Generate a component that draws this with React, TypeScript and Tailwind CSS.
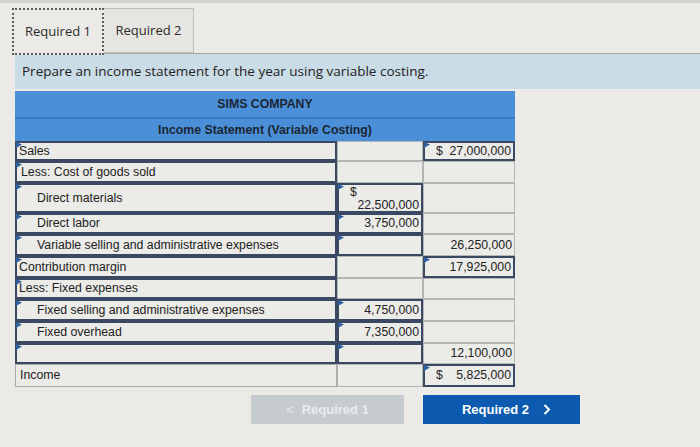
import React from "react";

type Cell = { input?: boolean; dollar?: boolean; val?: string; split?: boolean };
type Row = { label: string; indent: number; h: number; labelInput: boolean; c2: Cell; c3: Cell };

const rows: Row[] = [
  { label: "Sales", indent: 0, h: 20, labelInput: true, c2: {}, c3: { input: true, dollar: true, val: "27,000,000" } },
  { label: "Less: Cost of goods sold", indent: 1, h: 22, labelInput: true, c2: {}, c3: {} },
  { label: "Direct materials", indent: 2, h: 30, labelInput: true, c2: { input: true, split: true, val: "22,500,000" }, c3: {} },
  { label: "Direct labor", indent: 2, h: 21, labelInput: true, c2: { input: true, val: "3,750,000" }, c3: {} },
  { label: "Variable selling and administrative expenses", indent: 2, h: 22, labelInput: true, c2: { input: true }, c3: { val: "26,250,000" } },
  { label: "Contribution margin", indent: 0, h: 22, labelInput: true, c2: {}, c3: { input: true, val: "17,925,000" } },
  { label: "Less: Fixed expenses", indent: 0, h: 21, labelInput: true, c2: {}, c3: {} },
  { label: "Fixed selling and administrative expenses", indent: 2, h: 22, labelInput: true, c2: { input: true, val: "4,750,000" }, c3: {} },
  { label: "Fixed overhead", indent: 2, h: 22, labelInput: true, c2: { input: true, val: "7,350,000" }, c3: {} },
  { label: "", indent: 0, h: 21, labelInput: true, c2: { input: true }, c3: { val: "12,100,000" } },
  { label: "Income", indent: 1, h: 23, labelInput: false, c2: {}, c3: { input: true, dollar: true, val: "5,825,000" } },
];

function Flag() {
  return (
    <svg className="absolute left-[-1px] top-[-1px]" width="6" height="7" viewBox="0 0 6 7">
      <polygon points="0,0 6,2.5 0,6" fill="#2f5f9e" />
    </svg>
  );
}

function ValueCell({ c, h }: { c: Cell; h: number }) {
  const border = c.input ? "border-2 border-[#3a4961]" : "border border-[#b3b5b7]";
  return (
    <div className={`relative ${border} bg-[#ebebe8] text-[12.3px] text-[#222]`} style={{ height: h }}>
      {c.input && <Flag />}
      {c.split ? (
        <div className="flex h-full flex-col px-[2px]">
          <div className="pl-[9px] leading-[12px] mt-[1px]">$</div>
          <div className="text-right leading-[14px]">{c.val}</div>
        </div>
      ) : (
        <div className="flex h-full items-center justify-between pr-[2px] pl-[11px]">
          <span>{c.dollar ? "$" : ""}</span>
          <span>{c.val ?? ""}</span>
        </div>
      )}
    </div>
  );
}

export default function App() {
  return (
    <div
      className="relative h-[447px] w-[700px] overflow-hidden bg-[#ebeae6]"
      style={{ fontFamily: "'Liberation Sans', Arial, sans-serif" }}
    >
      <div className="h-[3px] bg-[#d3d2ce]" />
      {/* Tabs */}
      <div className="flex items-start pl-[12px] pt-[5px]" style={{ fontFamily: "'Open Sans', sans-serif" }}>
        <div className="flex h-[47px] w-[92px] items-center justify-center border-2 border-dotted border-[#5d5d5d] bg-[#ebeae6] text-[13px] text-[#2b2b2b]">
          Required 1
        </div>
        <div className="flex h-[45px] w-[90px] items-center justify-center border border-l-0 border-[#bdbcb8] bg-[#e6e5e1] text-[13px] text-[#2b2b2b]">
          Required 2
        </div>
      </div>
      {/* Instruction bar */}
      <div
        className="ml-[15px] mt-[-2px] flex h-[36px] items-center border-t border-[#a9aaa8] bg-[#cadce6] pl-[7px] text-[13.5px] text-[#222]"
        style={{ fontFamily: "'Open Sans', sans-serif" }}
      >
        Prepare an income statement for the year using variable costing.
      </div>
      {/* Table */}
      <div className="ml-[15px] mt-[2px] w-[500px]">
        <div className="flex h-[28px] items-center justify-center border-b-2 border-[#3d77bd] bg-[#4b8fd8] text-[12.3px] font-bold text-[#1c2633]">
          SIMS COMPANY
        </div>
        <div className="flex h-[22px] items-center justify-center bg-[#4b8fd8] text-[12.3px] font-bold text-[#1c2633]">
          Income Statement (Variable Costing)
        </div>
        <div className="grid grid-cols-[322px_86px_92px]">
          {rows.map((r, i) => (
            <React.Fragment key={i}>
              <div
                className={`relative flex items-center bg-[#ebebe8] text-[12.3px] text-[#222] ${
                  r.labelInput ? "border-2 border-[#3a4961]" : "border border-[#a8aaac]"
                } ${r.indent === 2 ? "pl-[20px]" : r.indent === 1 ? "pl-[4px]" : "pl-[2px]"}`}
                style={{ height: r.h }}
              >
                {r.labelInput && <Flag />}
                {r.label}
              </div>
              <ValueCell c={r.c2} h={r.h} />
              <ValueCell c={r.c3} h={r.h} />
            </React.Fragment>
          ))}
        </div>
      </div>
      {/* Buttons */}
      <div className="ml-[251px] mt-[8px] flex gap-[19px]">
        <div className="flex h-[29px] w-[153px] items-center justify-center gap-[8px] bg-[#c6cbd0] text-[13px] font-bold text-[#e9ecef]">
          <span className="font-normal">&lt;</span>
          <span>Required 1</span>
        </div>
        <div className="flex h-[29px] w-[157px] items-center justify-center gap-[14px] bg-[#0c5bb0] pl-[10px] text-[13px] font-bold text-white">
          <span>Required 2</span>
          <svg width="8" height="11" viewBox="0 0 8 11">
            <polyline points="1.5,1 6,5.5 1.5,10" fill="none" stroke="white" strokeWidth="2" />
          </svg>
        </div>
      </div>
    </div>
  );
}
